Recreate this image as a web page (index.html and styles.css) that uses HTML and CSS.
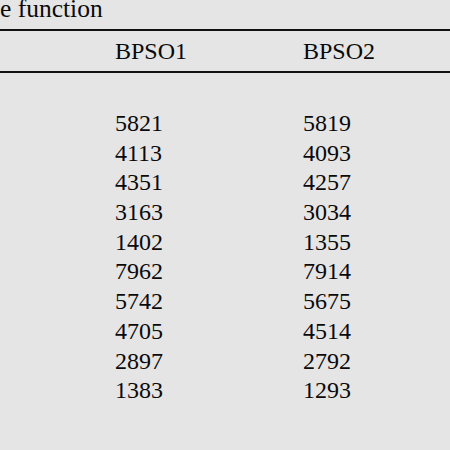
FILE: index.html
```html
<!DOCTYPE html>
<html>
<head>
<meta charset="utf-8">
<link rel="stylesheet" href="styles.css">
</head>
<body>
<div class="page">
  <div class="caption">e function</div>
  <div class="rule"></div>
  <div class="row head">
    <span></span><span>BPSO1</span><span>BPSO2</span>
  </div>
  <div class="rule"></div>
  <div class="body">
    <div class="row"><span></span><span>5821</span><span>5819</span></div>
    <div class="row"><span></span><span>4113</span><span>4093</span></div>
    <div class="row"><span></span><span>4351</span><span>4257</span></div>
    <div class="row"><span></span><span>3163</span><span>3034</span></div>
    <div class="row"><span></span><span>1402</span><span>1355</span></div>
    <div class="row"><span></span><span>7962</span><span>7914</span></div>
    <div class="row"><span></span><span>5742</span><span>5675</span></div>
    <div class="row"><span></span><span>4705</span><span>4514</span></div>
    <div class="row"><span></span><span>2897</span><span>2792</span></div>
    <div class="row"><span></span><span>1383</span><span>1293</span></div>
  </div>
</div>
</body>
</html>
```
FILE: styles.css
```css
html, body {
  margin: 0;
  padding: 0;
  background: #e5e5e5;
}
body {
  width: 450px;
  height: 450px;
  overflow: hidden;
}
.page {
  font-family: "Liberation Serif", "Times New Roman", serif;
  font-size: 24px;
  color: #0a0a0a;
}
.caption {
  font-size: 25.5px;
  line-height: 20px;
  height: 20px;
  margin-top: -1px;
  margin-bottom: 10px;
  white-space: nowrap;
}
.rule {
  height: 2px;
  background: #111;
}
.row {
  display: grid;
  grid-template-columns: 115px 188px 1fr;
  line-height: 29.7px;
  height: 29.7px;
}
.row.head {
  line-height: 40px;
  height: 40px;
}
.body {
  padding-top: 36px;
}
```
